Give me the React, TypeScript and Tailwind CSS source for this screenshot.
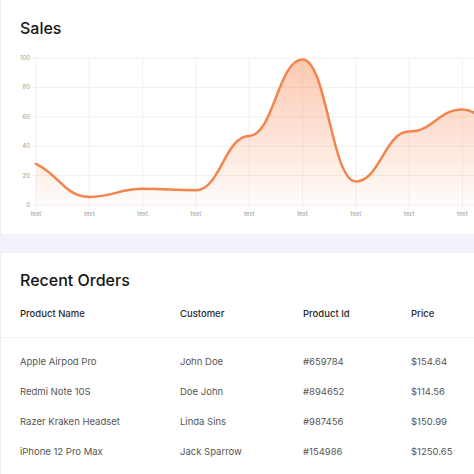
const VALUES = [28, 5.5, 11, 10, 47, 99, 16, 50, 65, 40];
const LABELS = ['text', 'text', 'text', 'text', 'text', 'text', 'text', 'text', 'text'];

const X0 = 35;
const STEP = 53.3;
const Y_ZERO = 155;
const Y_SCALE = 1.47;

type Pt = { x: number; y: number };

const ORDERS = [
  { name: 'Apple Airpod Pro', customer: 'John Doe', id: '#659784', price: '$154.64' },
  { name: 'Redmi Note 10S', customer: 'Doe John', id: '#894652', price: '$114.56' },
  { name: 'Razer Kraken Headset', customer: 'Linda Sins', id: '#987456', price: '$150.99' },
  { name: 'iPhone 12 Pro Max', customer: 'Jack Sparrow', id: '#154986', price: '$1250.65' },
];

// smooth curve, flat tangent at every data point
function buildPath(points: Pt[], k = 0.45) {
  let d = `M ${points[0].x} ${points[0].y}`;
  for (let i = 1; i < points.length; i++) {
    const p = points[i - 1];
    const c = points[i];
    const dx = (c.x - p.x) * k;
    // first segment leaves the start point already heading down
    const y1 = i === 1 ? p.y + (c.y - p.y) * 0.35 : p.y;
    d += ` C ${p.x + dx} ${y1} ${c.x - dx} ${c.y} ${c.x} ${c.y}`;
  }
  return d;
}

function SalesChart() {
  const points = VALUES.map((v, i) => ({ x: X0 + i * STEP, y: Y_ZERO - v * Y_SCALE }));
  const line = buildPath(points);
  const last = points[points.length - 1];
  const area = `${line} L ${last.x} ${Y_ZERO} L ${points[0].x} ${Y_ZERO} Z`;

  return (
    <svg width="474" height="172" className="block" style={{ overflow: 'hidden' }}>
      <defs>
        <linearGradient id="salesFill" x1="0" y1="8" x2="0" y2="155" gradientUnits="userSpaceOnUse">
          <stop offset="0" stopColor="#f8915f" stopOpacity="0.5" />
          <stop offset="1" stopColor="#f8915f" stopOpacity="0.03" />
        </linearGradient>
      </defs>

      {[0, 20, 40, 60, 80, 100].map((v) => {
        const y = Y_ZERO - v * Y_SCALE;
        return (
          <g key={v}>
            <line x1={X0 - 4} x2={474} y1={y} y2={y} stroke="#f0f0f0" strokeWidth="1" />
            <text x={29} y={y + 2} fontSize="6" fill="#9b9b9b" textAnchor="end" fontFamily="Inter, sans-serif">
              {v}
            </text>
          </g>
        );
      })}

      {LABELS.map((l, i) => {
        const x = X0 + i * STEP;
        return (
          <g key={i}>
            <line x1={x} x2={x} y1={8} y2={Y_ZERO + 4} stroke="#f0f0f0" strokeWidth="1" />
            <text x={x} y={166} fontSize="6" fill="#9b9b9b" textAnchor="middle" fontFamily="Inter, sans-serif">
              {l}
            </text>
          </g>
        );
      })}

      <path d={area} fill="url(#salesFill)" />
      <path d={line} fill="none" stroke="#f2844e" strokeWidth="2.5" strokeLinecap="round" />
    </svg>
  );
}

export default function App() {
  return (
    <div className="w-[474px] h-[474px] overflow-hidden bg-[#f2f2fa] font-['Inter',sans-serif]">
      <div className="bg-white h-[234px] border-l border-[#ececec]">
        <h2 className="pl-[19px] pt-[17px] h-[50px] text-[16px] font-medium leading-[22px] text-[#151515]">Sales</h2>
        <SalesChart />
      </div>

      <div className="mt-[19px] bg-white h-[221px] border-l border-[#ececec]">
        <h2 className="pl-[19px] pt-[16px] text-[16px] font-medium leading-[22px] text-[#151515]">Recent Orders</h2>
        <div className="grid grid-cols-[160px_123px_108px_1fr] pl-[19px] h-[46px] mt-[1px] items-center text-[9.5px] font-medium text-[#2a2a2a] border-b border-[#f0f0f0]">
          <div>Product Name</div>
          <div>Customer</div>
          <div>Product Id</div>
          <div>Price</div>
        </div>
        <div className="pt-[9px]">
          {ORDERS.map((o) => (
            <div
              key={o.id}
              className="grid grid-cols-[160px_123px_108px_1fr] pl-[19px] h-[30px] items-center text-[9.5px] text-[#555555]"
            >
              <div>{o.name}</div>
              <div>{o.customer}</div>
              <div>{o.id}</div>
              <div>{o.price}</div>
            </div>
          ))}
        </div>
      </div>
    </div>
  );
}
